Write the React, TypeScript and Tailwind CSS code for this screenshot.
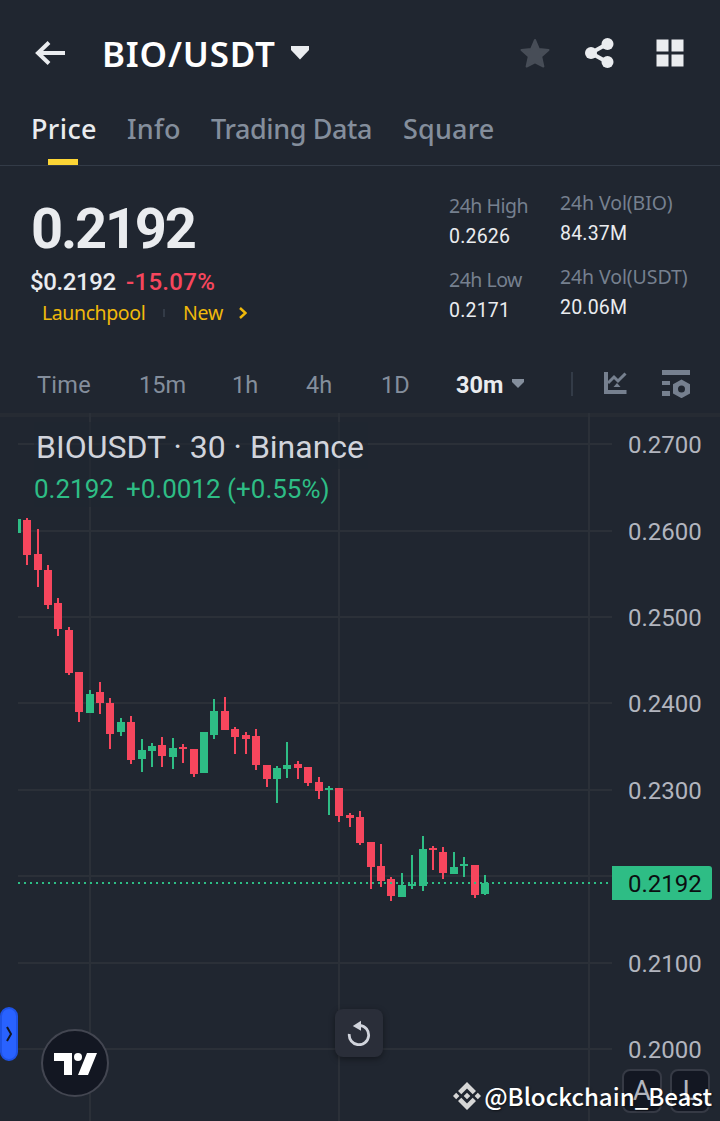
type Candle = [x: number, high: number, top: number, bottom: number, low: number, up: 0 | 1];

const candles: Candle[] = [
  [23, 518, 520, 555, 565, 0],
  [34, 529, 554, 570, 587, 0],
  [44, 565, 570, 605, 609, 0],
  [54, 598, 603, 629, 636, 0],
  [65, 627, 630, 673, 675, 0],
  [75, 672, 672, 712, 722, 0],
  [86, 690, 694, 713, 713, 1],
  [96, 682, 692, 703, 714, 0],
  [106, 698, 703, 734, 749, 0],
  [117, 718, 722, 732, 736, 1],
  [127, 716, 722, 760, 764, 0],
  [138, 739, 750, 759, 772, 1],
  [148, 743, 746, 751, 767, 1],
  [158, 737, 745, 756, 767, 0],
  [169, 738, 748, 757, 769, 1],
  [179, 744, 747, 749, 763, 0],
  [190, 749, 749, 774, 777, 0],
  [200, 732, 732, 773, 773, 1],
  [210, 699, 711, 735, 739, 1],
  [221, 697, 711, 730, 730, 0],
  [231, 727, 729, 737, 754, 0],
  [242, 732, 735, 739, 754, 0],
  [252, 729, 736, 765, 770, 0],
  [263, 765, 765, 779, 787, 0],
  [273, 766, 768, 779, 803, 1],
  [283, 742, 765, 769, 778, 1],
  [294, 761, 764, 768, 779, 0],
  [304, 767, 767, 783, 786, 0],
  [315, 777, 782, 791, 799, 0],
  [325, 786, 788, 790, 815, 1],
  [335, 788, 788, 816, 822, 0],
  [346, 813, 815, 818, 827, 0],
  [356, 811, 817, 843, 845, 0],
  [367, 842, 842, 867, 889, 0],
  [377, 844, 866, 881, 887, 0],
  [387, 877, 879, 896, 901, 0],
  [398, 873, 885, 897, 897, 1],
  [408, 855, 884, 886, 889, 1],
  [419, 836, 849, 886, 891, 1],
  [429, 846, 848, 850, 870, 0],
  [439, 847, 852, 873, 879, 0],
  [450, 852, 867, 874, 874, 1],
  [460, 857, 864, 866, 877, 1],
  [471, 865, 865, 895, 898, 0],
  [481, 875, 883, 894, 895, 1],
];

const gridRows = [443, 530, 616, 702, 789, 875, 962, 1048];
const gridCols = [89, 338, 588];

function Header() {
  return (
    <header className="flex h-[106px] items-center pl-[35px]">
      <svg width="30" height="24" viewBox="0 0 30 24" fill="none" stroke="#eaecef" strokeWidth="4">
        <path d="M30 12H3M14 1.5L3 12l11 10.5" />
      </svg>
      <h1 className="ml-[37px] w-[189px] pt-0.5 whitespace-nowrap font-['Noto_Sans',sans-serif] text-[35px] leading-[40px] font-semibold tracking-[0.8px] text-white">
        BIO/USDT
      </h1>
      <svg width="18" height="14" viewBox="0 0 18 14" fill="#eaecef">
        <path d="M0 0h18v4L9 13.5 0 4z" />
      </svg>
      <svg className="ml-[210px]" width="31" height="31" viewBox="0 0 31 31">
        <path
          d="M16 2l3.9 9.1 9.6.8-7.3 6.5 2.2 10.1-8.4-4.2-8.4 4.2 2.2-10.1L2.5 11.9l9.6-.8z"
          fill="#474d57"
          stroke="#474d57"
          strokeWidth="2"
          strokeLinejoin="round"
        />
      </svg>
      <svg className="ml-[34px]" width="30" height="30" viewBox="0 0 30 30" fill="#eaecef">
        <path d="M23 6L7 15l16 9" fill="none" stroke="#eaecef" strokeWidth="4" />
        <circle cx="23.5" cy="6" r="6" />
        <circle cx="7" cy="15" r="6" />
        <circle cx="23.5" cy="24" r="6" />
      </svg>
      <svg className="ml-[42px]" width="28" height="28" viewBox="0 0 28 28" fill="#eaecef">
        <path d="M.5.5h12v12H.5zM15.5.5h12v12h-12zM.5 15.5h12v12H.5zM15.5 15.5h12v12h-12z" />
      </svg>
    </header>
  );
}

function Tabs() {
  return (
    <nav className="flex h-[60px] border-b border-[#333b47] pl-[31px] font-['Noto_Sans',sans-serif] text-[27px] leading-[46px] font-medium whitespace-nowrap text-[#848e9c]">
      <div className="relative w-24 tracking-[0.4px] text-[#eaecef]">
        Price
        <span className="absolute bottom-0 left-[17px] h-1.5 w-[30px] bg-[#fcd535]" />
      </div>
      <div className="w-[84px] tracking-[0.3px]">Info</div>
      <div className="w-48 tracking-[-0.4px]">Trading Data</div>
      <div className="tracking-[0.2px]">Square</div>
    </nav>
  );
}

function Stat({ label, value }: { label: string; value: string }) {
  return (
    <div className="h-[74px] whitespace-nowrap">
      <div className="font-['Noto_Sans',sans-serif] text-[19.5px] leading-[27px] text-[#76808f]">{label}</div>
      <div className="pt-[3px] font-[Roboto,sans-serif] text-[19.5px] leading-[29px] tracking-[0.2px] text-[#eaecef]">{value}</div>
    </div>
  );
}

function Summary() {
  return (
    <section className="flex h-[188px] pl-[31px]">
      <div className="w-[418px] pt-[33px] whitespace-nowrap">
        <div className="font-[Roboto,sans-serif] text-[56px] leading-[60px] font-bold tracking-[-2.2px] text-[#eaecef]">0.2192</div>
        <div className="mt-[7px] flex font-[Roboto,sans-serif] text-2xl leading-8 font-medium">
          <span className="-ml-px w-24 tracking-[-0.4px] text-[#eaecef]">$0.2192</span>
          <span className="tracking-[0.3px] text-[#f6465d]">-15.07%</span>
        </div>
        <div className="flex h-[30px] items-center pl-[11px] font-['Noto_Sans',sans-serif] text-[19.5px] leading-[30px] text-[#f0b90b]">
          <span className="w-[121px] tracking-[-0.4px]">Launchpool</span>
          <span className="h-2 w-0.5 bg-[#333b47]" />
          <span className="ml-[18px] w-[56px] tracking-[-0.2px]">New</span>
          <svg width="8" height="12" viewBox="0 0 8 12" fill="none" stroke="#f0b90b" strokeWidth="2.5">
            <path d="M1 1l5.5 5L1 11" />
          </svg>
        </div>
      </div>
      <div className="w-[111px] pt-[26px] tracking-[-0.5px]">
        <Stat label="24h High" value="0.2626" />
        <Stat label="24h Low" value="0.2171" />
      </div>
      <div className="pt-[23px] tracking-[-0.1px]">
        <Stat label="24h Vol(BIO)" value="84.37M" />
        <Stat label="24h Vol(USDT)" value="20.06M" />
      </div>
    </section>
  );
}

function Intervals() {
  return (
    <div className="flex h-[59px] items-center pl-[37px] font-[Roboto,sans-serif] text-[23.5px] leading-[30px] whitespace-nowrap text-[#848e9c]">
      <span className="w-[102px] pt-0.5 tracking-[0.3px]">Time</span>
      <span className="w-[93px] pt-0.5">15m</span>
      <span className="w-[74px] pt-0.5">1h</span>
      <span className="w-[75px] pt-0.5">4h</span>
      <span className="w-[75px] pt-0.5">1D</span>
      <span className="w-[56px] pt-0.5 font-bold text-[#eaecef]">30m</span>
      <svg width="12" height="9" viewBox="0 0 12 9" fill="#848e9c">
        <path d="M0 0h12v3L6 9 0 3z" />
      </svg>
      <span className="ml-[47px] h-6 w-0.5 bg-[#333b47]" />
      <svg className="ml-[31px]" width="23" height="23" viewBox="0 0 23 23" fill="none" stroke="#76808f">
        <path d="M2 0v20h20.5" strokeWidth="4" />
        <path d="M4 11l6-6 4 4 7.5-7.5" strokeWidth="3" />
        <path d="M9.5 15l3.5-4 3.5 4z" fill="#76808f" stroke="none" />
      </svg>
      <svg className="ml-[35px]" width="28" height="28" viewBox="0 0 28 28" fill="#76808f">
        <path d="M0 0h28v5H0zM0 11h8v4H0zM0 21h8v5H0z" />
        <path fillRule="evenodd" d="M19.5 9.5l8.5 4.8v9.2l-8.5 4.7-8.5-4.7v-9.2zM19.5 15.5a3.5 3.5 0 100 7 3.5 3.5 0 000-7z" />
      </svg>
    </div>
  );
}

function PriceChart() {
  return (
    <svg width="612" height="708" viewBox="0 413 612 708" shapeRendering="crispEdges">
      {gridRows.map((y) => (
        <rect key={y} x="18" y={y} width="594" height="2" fill="#2b3038" />
      ))}
      {gridCols.map((x) => (
        <rect key={x} x={x} y="413" width="2" height="708" fill="#2b3038" />
      ))}
      <rect x="18" y="519" width="3" height="14" fill="#2ebd85" />
      {candles.map(([x, high, top, bottom, low, up]) => (
        <g key={x} fill={up ? "#2ebd85" : "#f6465d"}>
          <rect x={x + 3} y={high} width="2" height={low - high} />
          <rect x={x} y={top} width="8" height={bottom - top} />
        </g>
      ))}
      <path d="M18 883H609" stroke="#2ebd85" strokeWidth="2" strokeDasharray="2 4" />
    </svg>
  );
}

function PriceAxis() {
  return (
    <div className="flex w-[108px] flex-col pt-[17px] font-[Roboto,sans-serif] text-2xl leading-[30px] text-[#b2b5be]">
      <div className="h-[86.5px] pl-4">0.2700</div>
      <div className="h-[86.5px] pl-4">0.2600</div>
      <div className="h-[86px] pl-4">0.2500</div>
      <div className="h-[87px] pl-4">0.2400</div>
      <div className="h-[90px] pl-4">0.2300</div>
      <div className="h-[34px] w-[100px] rounded-r-[3px] bg-[#2ebd85] pl-4 leading-[36px] text-[#0b0e11]">0.2192</div>
      <div className="mt-[49px] h-[86px] pl-4">0.2100</div>
      <div className="h-[34px] pl-4">0.2000</div>
      <div className="flex gap-2 pl-2.5">
        <AxisButton label="A" />
        <AxisButton label="L" />
      </div>
    </div>
  );
}

function AxisButton({ label }: { label: string }) {
  return (
    <button className="h-11 w-10 shrink-0 rounded-lg border-2 border-[#363a45] bg-[#131722] text-[28px] leading-[38px] text-[#b2b5be]">
      {label}
    </button>
  );
}

function Watermark() {
  return (
    <div className="absolute right-2 bottom-[7px] flex items-center gap-[3px] whitespace-nowrap">
      <svg width="28" height="28" viewBox="0 0 28 28" fill="#d6d6d6">
        <path d="M14 0l9 9-3.3 3.3L14 6.6l-5.7 5.7L5 9zM14 28l9-9-3.3-3.3-5.7 5.7-5.7-5.7L5 19zM14 10.7l3.3 3.3-3.3 3.3-3.3-3.3zM3.2 10.8L6.4 14l-3.2 3.2L0 14zM24.8 10.8L28 14l-3.2 3.2-3.2-3.2z" />
      </svg>
      <span className="font-['Noto_Sans_CJK_SC',sans-serif] text-[24.1px] leading-9 font-medium text-white [text-shadow:1px_1px_2px_rgba(0,0,0,0.5)]">
        @Blockchain_Beast
      </span>
    </div>
  );
}

export default function App() {
  return (
    <main className="h-[1121px] w-[720px] overflow-hidden bg-[#202630]">
      <Header />
      <Tabs />
      <Summary />
      <Intervals />
      <section className="relative flex h-[708px]">
        <div className="absolute top-0 left-0 h-1 w-full bg-[#262b33]" />
        <div className="relative">
          <PriceChart />
        </div>
        <PriceAxis />
        <div className="absolute top-[9px] left-[34px] font-[Roboto,sans-serif] whitespace-nowrap">
          <div className="h-[47px] w-[334px] bg-[#202630]/60 pl-0.5 text-[32px] leading-[50px] text-[#d1d4dc]">BIOUSDT · 30 · Binance</div>
          <div className="flex h-[38px] w-[298px] bg-[#202630]/60 text-[26px] leading-[40px] text-[#2ebd85]">
            <span className="w-[92px]">0.2192</span>
            <span>+0.0012 (+0.55%)</span>
          </div>
        </div>
        <button className="absolute top-[594px] left-0 flex h-[54px] w-[18px] items-center justify-center rounded-[9px] border-2 border-[#1e53e5] bg-[#2962ff]">
          <svg width="6" height="16" viewBox="0 0 6 16" fill="none" stroke="#131722" strokeWidth="2">
            <path d="M1 1l4 7-4 7" />
          </svg>
        </button>
        <div className="absolute top-[616px] left-[41px] flex size-[68px] items-center justify-center rounded-full border-2 border-[#434651] bg-[#131722] pt-0.5 pl-px">
          <svg width="43" height="22" viewBox="0 0 43 22" fill="#fff">
            <path d="M0 0h18v22h-8V8H0zM33 0h10l-9 22H24z" />
            <circle cx="24" cy="4" r="4" />
          </svg>
        </div>
        <button className="absolute top-[596px] left-[335px] flex size-12 items-center justify-center rounded-lg bg-[#2a2e39] shadow-[0_2px_6px_rgba(0,0,0,0.4)]">
          <svg width="24" height="26" viewBox="0 0 24 26" fill="none">
            <path d="M2.3 14A9.7 9.7 0 1013 5.4" stroke="#d1d4dc" strokeWidth="2.8" />
            <path d="M14 .8v10L5.8 6z" fill="#d1d4dc" />
          </svg>
        </button>
        <Watermark />
      </section>
    </main>
  );
}
